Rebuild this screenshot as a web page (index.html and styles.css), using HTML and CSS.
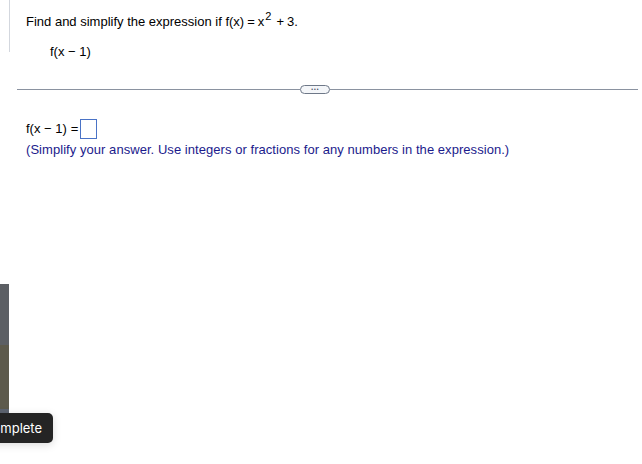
FILE: index.html
```html
<!DOCTYPE html>
<html>
<head>
<meta charset="utf-8">
<link rel="stylesheet" href="styles.css">
</head>
<body>
<div class="page">
  <div class="question">
    <p class="prompt">Find and simplify the expression if f(x)<span class="op">=</span>x<sup>2</sup><span class="op">+</span>3.</p>
    <p class="expr">f(x − 1)</p>
  </div>
  <div class="divider">
    <span class="line left"></span>
    <span class="pill"><span class="dots">•••</span></span>
    <span class="line"></span>
  </div>
  <div class="answer">
    <p class="ans-row">f(x − 1)<span class="op">=</span><span class="box"></span></p>
    <p class="hint">(Simplify your answer. Use integers or fractions for any numbers in the expression.)</p>
  </div>
</div>
<div class="side-strip"><div class="gray"></div><div class="olive"></div><div class="blue"></div></div>
<div class="toast">Complete</div>
</body>
</html>
```
FILE: styles.css
```css
html, body { margin: 0; padding: 0; background: #fff; }
body { width: 642px; height: 464px; position: relative; overflow: hidden; font-family: "Liberation Sans", Arial, sans-serif; color: #000; }
.question { margin-left: 9px; border-left: 1px solid #d3d7de; height: 52px; padding-left: 16px; padding-top: 14px; box-sizing: border-box; }
.prompt { margin: 0; font-size: 13px; line-height: 16px; }
.prompt sup { font-size: 11px; vertical-align: 0; position: relative; top: -6px; margin-left: 1px; margin-right: 2px; }
.op { margin: 0 3px; }
.expr { margin: 14px 0 0 24px; font-size: 13px; line-height: 16px; }
.divider { display: flex; align-items: center; margin: 32px 4px 0 17px; height: 10px; }
.line { flex: 1; height: 1px; background: #8a92a0; }
.line.left { flex: 0 0 283px; }
.pill { width: 28px; height: 7px; border: 1px solid #6e7888; border-radius: 5px; background: #f4f6f9; display: flex; align-items: center; justify-content: center; box-sizing: content-box; }
.dots { font-size: 5px; letter-spacing: 1px; color: #3f4a5c; line-height: 7px; margin-left: 1px; }
.answer { padding-left: 26px; margin-top: 24px; }
.ans-row { margin: 0; font-size: 13px; line-height: 21px; display: flex; align-items: center; }
.ans-row .op { margin: 0 2px 0 4px; }
.box { display: inline-block; width: 15px; height: 18px; border: 1.5px solid #4a73c6; }
.hint { margin: 3px 0 0 0; font-size: 13px; line-height: 16px; color: #1b1b8c; letter-spacing: 0.05px; }
.side-strip { position: absolute; left: 0; top: 284px; width: 9px; }
.side-strip .gray { height: 61px; background: #5c5f64; }
.side-strip .olive { height: 64px; background: #5d5a4c; }
.side-strip .blue { height: 4px; background: #5d6470; }
.toast { position: absolute; left: -28px; top: 413px; width: 81px; height: 30px; box-sizing: border-box; background: #242424; color: #fff; border-radius: 5px; font-family: Inter, Roboto, sans-serif; font-size: 13px; line-height: 30px; padding-left: 11px; box-shadow: 0 2px 8px rgba(0,0,0,0.15); }
```
